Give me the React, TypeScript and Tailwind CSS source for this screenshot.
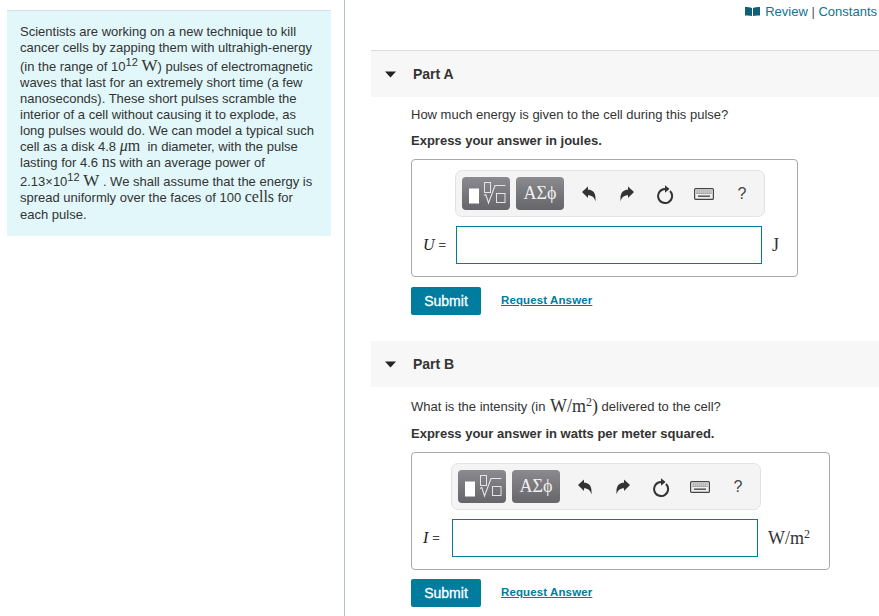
const serif = "font-['Liberation_Serif',serif]";

function BookIcon() {
  return (
    <svg width="15" height="9" viewBox="0 0 15 9" className="fill-[#0f5f78]">
      <path d="M0 0 C2.500 0 5 0 7 1 V9 C5 8.300 2.500 8.300 0 8.500Z" />
      <path d="M15 0 C12.500 0 10 0 8 1 V9 C10 8.300 12.500 8.300 15 8.500Z" />
    </svg>
  );
}

function Caret() {
  return (
    <svg width="11" height="7" viewBox="0 0 11 7" className="fill-[#222]">
      <path d="M0 .5 H11 L5.500 6.500Z" />
    </svg>
  );
}

function UndoIcon({ flip }: { flip?: boolean }) {
  return (
    <svg width="14" height="16" viewBox="0 0 14 16" className={flip ? "-scale-x-100 fill-[#333]" : "fill-[#333]"}>
      <path d="M0 6 L6 .5 V3.800 C11 3.800 14.300 7 13.400 15.500 C12.500 11.500 10 9.300 6 9.300 V12Z" />
    </svg>
  );
}

function RefreshIcon() {
  return (
    <svg width="18" height="20" viewBox="0 0 18 20" fill="none" className="stroke-[#333]">
      <path d="M14 6 A7 7 0 1 1 9 4" strokeWidth="2" transform="translate(0 1)" />
      <path d="M9 1.200 L13.500 5 L9 8.800Z" className="fill-[#333]" stroke="none" />
    </svg>
  );
}

function KeyboardIcon() {
  return (
    <svg width="20" height="12" viewBox="0 0 20 12">
      <rect x=".6" y=".6" width="18.800" height="10.800" rx="1" fill="#eee" stroke="#444" strokeWidth="1.200" />
      <path d="M2.500 3 H17.500 M2.500 5.200 H17.500" stroke="#555" strokeWidth="1.200" strokeDasharray="1.200 .8" />
      <path d="M4 8.200 H16" stroke="#555" strokeWidth="1.500" />
    </svg>
  );
}

function TemplateIcon() {
  return (
    <svg width="48" height="33" viewBox="0 0 48 33" fill="none" stroke="#e4e4e4">
      <rect x="7" y="11.500" width="10" height="15" fill="#fff" stroke="none" />
      <rect x="22.500" y="5.500" width="6" height="10" />
      <path d="M22 18.500 L23.800 17.500 L26.500 26 L33 8.500 H43.500" strokeWidth="1.100" />
      <rect x="34.500" y="16.500" width="8.500" height="9" />
    </svg>
  );
}

function Toolbar() {
  return (
    <div className="flex h-[47px] w-[310px] items-center rounded-[7px] border border-[#e2e2e2] bg-[#f4f4f4] pl-[6px]">
      <div className="h-[33px] w-[48px] rounded-[4px] bg-gradient-to-b from-[#8b8b8f] to-[#65656a]">
        <TemplateIcon />
      </div>
      <div className={`ml-[6px] flex h-[33px] w-[48px] items-center justify-center rounded-[4px] bg-gradient-to-b from-[#8b8b8f] to-[#65656a] text-[18px] text-[#f0f0f0] ${serif}`}>
        ΑΣϕ
      </div>
      <div className="ml-[6px] flex items-center">
        <span className="flex w-[38px] justify-center"><UndoIcon /></span>
        <span className="flex w-[38px] justify-center"><UndoIcon flip /></span>
        <span className="flex w-[38px] justify-center"><RefreshIcon /></span>
        <span className="ml-[1px] flex w-[38px] justify-center"><KeyboardIcon /></span>
        <span className="flex w-[38px] justify-center text-[16px] text-[#444]">?</span>
      </div>
    </div>
  );
}

function AnswerBox({
  label,
  unit,
  labelWidth,
  unitWidth,
  toolbarLeft,
}: {
  label: string;
  unit: React.ReactNode;
  labelWidth: string;
  unitWidth: string;
  toolbarLeft: string;
}) {
  return (
    <div className="mt-[9px] w-fit rounded-[4px] border border-[#a9a9a9] pt-[10px] pb-[12px]">
      <div className={toolbarLeft}>
        <Toolbar />
      </div>
      <div className="mt-[9px] flex items-center">
        <span className={`${labelWidth} flex items-center gap-[4px] pl-[11px] text-[13px] text-[#444]`}>
          <i className={`${serif} text-[16px] text-[#222]`}>{label}</i> =
        </span>
        <div className="h-[38px] w-[306px] border border-[#007c9f] bg-white" />
        <span className={`${unitWidth} pl-[10px] text-[18px] text-[#333] ${serif}`}>{unit}</span>
      </div>
    </div>
  );
}

function Part({
  name,
  prompt,
  promptHeight,
  hint,
  submitGap,
  box,
}: {
  name: string;
  prompt: React.ReactNode;
  promptHeight: string;
  hint: string;
  submitGap: string;
  box: React.ReactNode;
}) {
  return (
    <section>
      <div className="flex h-[46px] items-center bg-[#f7f7f7] pl-[14px]">
        <Caret />
        <span className="ml-[17px] text-[14px] font-bold text-[#333]">{name}</span>
      </div>
      <div className="pl-[40px]">
        <p className={`mt-[9px] flex ${promptHeight} items-center whitespace-pre text-[13px] text-[#333]`}>{prompt}</p>
        <p className="mt-[8px] h-[18px] text-[13px] leading-[18px] font-bold text-[#333]">{hint}</p>
        {box}
        <div className={`${submitGap} flex items-center`}>
          <button className="h-[28px] w-[70px] rounded-[2px] bg-[#007c9f] text-[14px] text-white [-webkit-text-stroke:0.3px_white]">Submit</button>
          <a className="ml-[20px] text-[11.500px] font-bold tracking-[0.01em] text-[#007c9f] underline">Request Answer</a>
        </div>
      </div>
    </section>
  );
}

export default function App() {
  return (
    <div className="flex h-[616px] w-[879px] overflow-hidden bg-white font-['Liberation_Sans',sans-serif]">
      <aside className="h-full w-[345px] shrink-0 border-r border-[#b5c3cc] pt-[10px] pl-[7px]">
        <div className="h-[226px] w-[324px] border-t border-[#d9dfe3] bg-[#e1f7f9] pt-[13px] pr-[14px] pl-[13px] text-[13px] leading-[16px] text-[#333]">
          Scientists are working on a new technique to kill cancer cells by zapping them with ultrahigh-energy (in the
          range of{" "}
          <span className="whitespace-nowrap">
            <span className="inline-block h-[15px] w-0" />10<sup className="text-[11px]">12</sup>
          </span>{" "}
          <span className={`${serif} text-[17px] leading-[0]`}>W</span>) pulses of electromagnetic waves that last for
          an extremely short time (a few nanoseconds). These short pulses scramble the interior of a cell without
          causing it to explode, as long pulses would do. We can model a typical such cell as a disk 4.8{" "}
          <span className={`${serif} text-[16px] leading-[0]`}><i>μ</i>m</span>&nbsp; in diameter, with the pulse
          lasting for 4.6 <span className={`${serif} text-[16px] leading-[0]`}>ns</span> with an average power of{" "}
          <span className="whitespace-nowrap">
            <span className="inline-block h-[15px] w-0" />2.13×10<sup className="text-[11px]">12</sup>
          </span>{" "}
          <span className={`${serif} text-[17px] leading-[0]`}>W</span> . We shall assume that the energy is spread
          uniformly over the faces of 100 <span className={`${serif} text-[16px] leading-[0]`}>cells</span> for{" "}
          <span className="whitespace-nowrap">
            <span className="inline-block h-[13px] w-0" />each
          </span>{" "}
          pulse.
        </div>
      </aside>

      <main className="min-w-0 flex-1 pl-[26px]">
        <div className="flex h-[51px] items-start justify-end gap-[5px] border-b border-[#dcdcdc] pt-[2px] pr-[2px] text-[13px] text-[#0f7392]">
          <span className="mt-[5px]"><BookIcon /></span>
          <span>Review <span className="text-[#555]">|</span> Constants</span>
        </div>
        <Part
          name="Part A"
          prompt="How much energy is given to the cell during this pulse?"
          promptHeight="h-[18px]"
          hint="Express your answer in joules."
          submitGap="mt-[10px]"
          box={
            <AnswerBox
              label="U"
              unit="J"
              labelWidth="w-[44px]"
              unitWidth="w-[35px]"
              toolbarLeft="pl-[43px]"
            />
          }
        />
        <div className="h-[26px]" />
        <Part
          name="Part B"
          prompt={
            <>
              What is the intensity (in <span className={`${serif} ml-[1px] text-[18px]`}>W/m<sup className="text-[12px]">2</sup>)</span> delivered to the cell?
            </>
          }
          promptHeight="h-[21px]"
          hint="Express your answer in watts per meter squared."
          submitGap="mt-[9px]"
          box={
            <AnswerBox
              label="I"
              unit={<>W/m<sup className="text-[12px]">2</sup></>}
              labelWidth="w-[40px]"
              unitWidth="w-[71px]"
              toolbarLeft="pl-[39px]"
            />
          }
        />
      </main>
    </div>
  );
}
